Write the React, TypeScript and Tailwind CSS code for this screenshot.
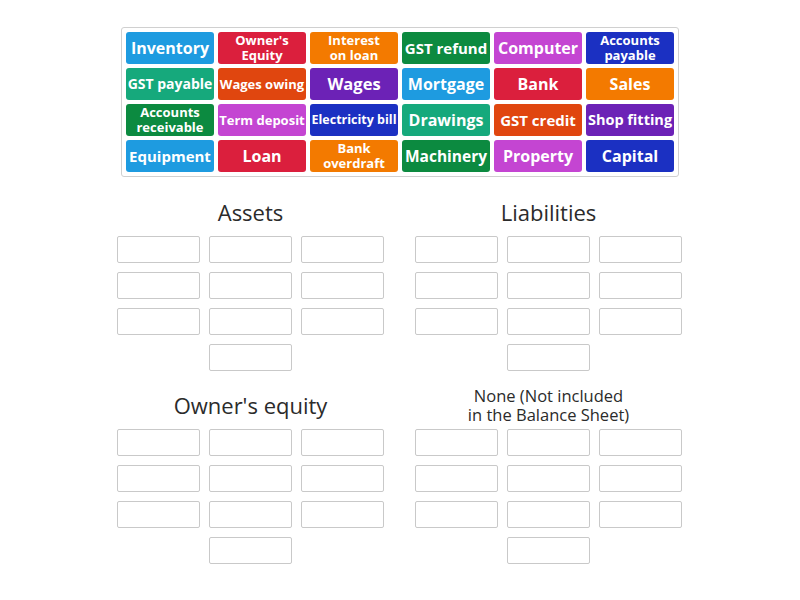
import React from "react";

type Tile = { t: string[]; c: string; s: string };

const C = {
  blue: "bg-[#1e9be0]",
  red: "bg-[#db1f3d]",
  orange: "bg-[#f37a00]",
  dgreen: "bg-[#0c8a40]",
  magenta: "bg-[#c445d2]",
  dblue: "bg-[#1b30c2]",
  teal: "bg-[#16a97c]",
  ored: "bg-[#e0460f]",
  purple: "bg-[#6c22b6]",
};

const tiles: Tile[] = [
  { t: ["Inventory"], c: C.blue, s: "text-[16px]" },
  { t: ["Owner's", "Equity"], c: C.red, s: "text-[13px]" },
  { t: ["Interest", "on loan"], c: C.orange, s: "text-[13px]" },
  { t: ["GST refund"], c: C.dgreen, s: "text-[15px]" },
  { t: ["Computer"], c: C.magenta, s: "text-[16px]" },
  { t: ["Accounts", "payable"], c: C.dblue, s: "text-[13px]" },
  { t: ["GST payable"], c: C.teal, s: "text-[14px]" },
  { t: ["Wages owing"], c: C.ored, s: "text-[13px]" },
  { t: ["Wages"], c: C.purple, s: "text-[16.5px]" },
  { t: ["Mortgage"], c: C.blue, s: "text-[16px]" },
  { t: ["Bank"], c: C.red, s: "text-[16px]" },
  { t: ["Sales"], c: C.orange, s: "text-[16px]" },
  { t: ["Accounts", "receivable"], c: C.dgreen, s: "text-[13px]" },
  { t: ["Term deposit"], c: C.magenta, s: "text-[13px]" },
  { t: ["Electricity bill"], c: C.dblue, s: "text-[12.5px]" },
  { t: ["Drawings"], c: C.teal, s: "text-[16px]" },
  { t: ["GST credit"], c: C.ored, s: "text-[15px]" },
  { t: ["Shop fitting"], c: C.purple, s: "text-[14.5px]" },
  { t: ["Equipment"], c: C.blue, s: "text-[15px]" },
  { t: ["Loan"], c: C.red, s: "text-[16px]" },
  { t: ["Bank", "overdraft"], c: C.orange, s: "text-[13px]" },
  { t: ["Machinery"], c: C.dgreen, s: "text-[15.5px]" },
  { t: ["Property"], c: C.magenta, s: "text-[16px]" },
  { t: ["Capital"], c: C.dblue, s: "text-[16px]" },
];

function Bucket({ title }: { title: string[] }) {
  return (
    <div className="flex flex-col">
      <div
        className={`h-[39px] pb-[2px] flex flex-col items-center justify-center text-[#2b2b2b] ${
          title.length > 1 ? "text-[16.5px] leading-[19px]" : "text-[22px] leading-[26px]"
        }`}
      >
        {title.map((l, i) => (
          <div key={i}>{l}</div>
        ))}
      </div>
      <div className="mt-[4px] grid grid-cols-[83px_83px_83px] gap-x-[9px] gap-y-[9px]">
        {Array.from({ length: 9 }).map((_, i) => (
          <div key={i} className="h-[27px] border border-[#c9c9c9] rounded-[2px] bg-white" />
        ))}
        <div className="col-start-2 h-[27px] border border-[#c9c9c9] rounded-[2px] bg-white" />
      </div>
    </div>
  );
}

export default function App() {
  return (
    <div
      className="w-[800px] h-[600px] bg-white flex flex-col items-start"
      style={{ fontFamily: '"Open Sans", sans-serif' }}
    >
      <div className="mt-[27px] ml-[121px] border border-[#d0d0d0] rounded-[3px] p-[4px] grid grid-cols-[88px_88px_88px_88px_88px_88px] gap-[4px]">
        {tiles.map((tile, i) => (
          <div
            key={i}
            className={`${tile.c} h-[32px] rounded-[3px] flex flex-col items-center justify-center text-white font-bold text-center whitespace-nowrap ${tile.s} ${
              tile.t.length > 1 ? "leading-[15px]" : "leading-[20px]"
            }`}
          >
            {tile.t.map((l, j) => (
              <div key={j}>{l}</div>
            ))}
          </div>
        ))}
      </div>
      <div className="mt-[16px] ml-[117px] grid grid-cols-[267px_267px] gap-x-[31px] gap-y-[15px]">
        <Bucket title={["Assets"]} />
        <Bucket title={["Liabilities"]} />
        <Bucket title={["Owner's equity"]} />
        <Bucket title={["None (Not included", "in the Balance Sheet)"]} />
      </div>
    </div>
  );
}
